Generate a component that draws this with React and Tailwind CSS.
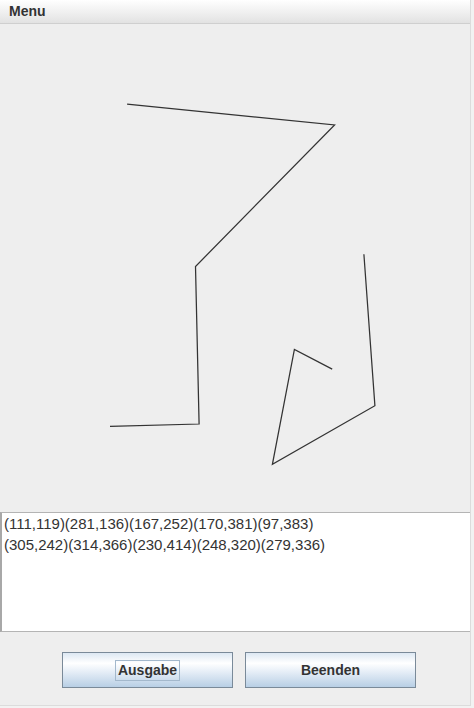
import React from "react";

const line1 = [
  [127.1, 104.1],
  [334.6, 124.9],
  [195.5, 266.5],
  [199.1, 424.0],
  [110.0, 426.4],
];
const line2 = [
  [363.9, 254.3],
  [374.9, 405.7],
  [272.4, 464.3],
  [294.4, 349.5],
  [332.2, 369.1],
];
const pts = (a) => a.map((p) => p.join(",")).join(" ");

export default function App() {
  return (
    <div className="w-[474px] h-[708px] bg-[#f2f2f2] flex overflow-hidden font-['Liberation_Sans',Arial,sans-serif]">
      <div className="w-[471px] h-[706px] flex flex-col bg-[#eeeeee] border-r border-b border-[#dcdcdc]">
        <div className="h-[24px] shrink-0 bg-[linear-gradient(to_bottom,#ffffff,#e2e2e2)] border-b border-[#cfcfcf] flex items-center pl-[9px]">
          <span className="text-[14px] font-bold text-[#333333] leading-none mt-[-2px]">Menu</span>
        </div>
        <div className="h-[488px] shrink-0 relative">
          <svg width="470" height="488" viewBox="0 24 470 488" className="block">
            <polyline points={pts(line1)} fill="none" stroke="#333333" strokeWidth="1.25" />
            <polyline points={pts(line2)} fill="none" stroke="#333333" strokeWidth="1.25" />
          </svg>
        </div>
        <div className="h-[120px] shrink-0 bg-white border-t border-b border-[#b4b4b4] border-l-[2px] border-l-[#a8a8a8] pl-[2px] text-[15px] leading-[21px] text-[#333333]">
          <div>(111,119)(281,136)(167,252)(170,381)(97,383)</div>
          <div>(305,242)(314,366)(230,414)(248,320)(279,336)</div>
        </div>
        <div className="flex-1 flex items-start pt-[20px] pl-[62px] gap-[12px]">
          <button className="w-[171px] h-[36px] border border-[#7a8a99] bg-[linear-gradient(to_bottom,#dde8f3_0%,#ffffff_30%,#e6eef7_55%,#b8cfe5_100%)] flex items-center justify-center">
            <span className="border border-[#a3b8cc] px-[2px] h-[21px] flex items-center text-[14px] font-bold text-[#333333]">Ausgabe</span>
          </button>
          <button className="w-[171px] h-[36px] border border-[#7a8a99] bg-[linear-gradient(to_bottom,#dde8f3_0%,#ffffff_30%,#e6eef7_55%,#b8cfe5_100%)] flex items-center justify-center">
            <span className="text-[14px] font-bold text-[#333333]">Beenden</span>
          </button>
        </div>
      </div>
    </div>
  );
}
